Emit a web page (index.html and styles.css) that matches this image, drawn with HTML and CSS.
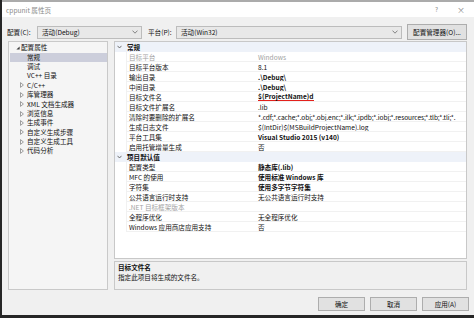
FILE: index.html
```html
<!DOCTYPE html>
<html lang="zh-CN">
<head>
<meta charset="utf-8">
<title>cppunit 属性页</title>
<link rel="stylesheet" href="styles.css">
</head>
<body>
<div class="frame">
  <div class="window">
    <div class="titlebar">
      <span class="title">cppunit 属性页</span>
      <span class="tb-btns"><span class="help">?</span><span class="close">×</span></span>
    </div>

    <div class="toolbar">
      <span class="lbl lbl-config">配置(C):</span>
      <div class="combo combo-config"><span>活动(Debug)</span><svg class="dd" width="6" height="4" viewBox="0 0 6 4"><path d="M0.5 0.6 L3 3.2 L5.5 0.6" fill="none" stroke="#6a6a6a" stroke-width="0.8"/></svg></div>
      <span class="lbl lbl-plat">平台(P):</span>
      <div class="combo combo-plat"><span>活动(Win32)</span><svg class="dd" width="6" height="4" viewBox="0 0 6 4"><path d="M0.5 0.6 L3 3.2 L5.5 0.6" fill="none" stroke="#6a6a6a" stroke-width="0.8"/></svg></div>
      <div class="btn btn-mgr">配置管理器(O)...</div>
    </div>

    <div class="main">
      <div class="tree">
        <div class="node root"><svg class="exp" width="4" height="4" viewBox="0 0 4 4"><path d="M3.6 0.4 V3.6 H0.4 Z" fill="#3c3c3c"/></svg><span>配置属性</span></div>
        <div class="node leaf selected">常规</div>
        <div class="node leaf">调试</div>
        <div class="node leaf">VC++ 目录</div>
        <div class="node branch"><svg class="col" width="4" height="6" viewBox="0 0 4 6"><path d="M0.5 0.6 L3.4 3 L0.5 5.4 Z" fill="none" stroke="#7a7a7a" stroke-width="0.7"/></svg><span>C/C++</span></div>
        <div class="node branch"><svg class="col" width="4" height="6" viewBox="0 0 4 6"><path d="M0.5 0.6 L3.4 3 L0.5 5.4 Z" fill="none" stroke="#7a7a7a" stroke-width="0.7"/></svg><span>库管理器</span></div>
        <div class="node branch"><svg class="col" width="4" height="6" viewBox="0 0 4 6"><path d="M0.5 0.6 L3.4 3 L0.5 5.4 Z" fill="none" stroke="#7a7a7a" stroke-width="0.7"/></svg><span>XML 文档生成器</span></div>
        <div class="node branch"><svg class="col" width="4" height="6" viewBox="0 0 4 6"><path d="M0.5 0.6 L3.4 3 L0.5 5.4 Z" fill="none" stroke="#7a7a7a" stroke-width="0.7"/></svg><span>浏览信息</span></div>
        <div class="node branch"><svg class="col" width="4" height="6" viewBox="0 0 4 6"><path d="M0.5 0.6 L3.4 3 L0.5 5.4 Z" fill="none" stroke="#7a7a7a" stroke-width="0.7"/></svg><span>生成事件</span></div>
        <div class="node branch"><svg class="col" width="4" height="6" viewBox="0 0 4 6"><path d="M0.5 0.6 L3.4 3 L0.5 5.4 Z" fill="none" stroke="#7a7a7a" stroke-width="0.7"/></svg><span>自定义生成步骤</span></div>
        <div class="node branch"><svg class="col" width="4" height="6" viewBox="0 0 4 6"><path d="M0.5 0.6 L3.4 3 L0.5 5.4 Z" fill="none" stroke="#7a7a7a" stroke-width="0.7"/></svg><span>自定义生成工具</span></div>
        <div class="node branch"><svg class="col" width="4" height="6" viewBox="0 0 4 6"><path d="M0.5 0.6 L3.4 3 L0.5 5.4 Z" fill="none" stroke="#7a7a7a" stroke-width="0.7"/></svg><span>代码分析</span></div>
      </div>

      <div class="right">
        <div class="grid">
          <div class="row head"><svg class="chev" width="5" height="4" viewBox="0 0 5 4"><path d="M0.5 0.8 L2.5 3 L4.5 0.8" fill="none" stroke="#505050" stroke-width="0.8"/></svg><span>常规</span></div>
          <div class="row"><span class="gut"></span><span class="name dim">目标平台</span><span class="val dim">Windows</span></div>
          <div class="row"><span class="gut"></span><span class="name">目标平台版本</span><span class="val">8.1</span></div>
          <div class="row"><span class="gut"></span><span class="name">输出目录</span><span class="val b">.\Debug\</span></div>
          <div class="row"><span class="gut"></span><span class="name">中间目录</span><span class="val b">.\Debug\</span></div>
          <div class="row"><span class="gut"></span><span class="name">目标文件名</span><span class="val b"><span class="mark">$(ProjectName)d</span></span></div>
          <div class="row"><span class="gut"></span><span class="name">目标文件扩展名</span><span class="val">.lib</span></div>
          <div class="row"><span class="gut"></span><span class="name">清除时要删除的扩展名</span><span class="val long">*.cdf;*.cache;*.obj;*.obj.enc;*.ilk;*.ipdb;*.iobj;*.resources;*.tlb;*.tli;*.</span></div>
          <div class="row"><span class="gut"></span><span class="name">生成日志文件</span><span class="val">$(IntDir)$(MSBuildProjectName).log</span></div>
          <div class="row"><span class="gut"></span><span class="name">平台工具集</span><span class="val b">Visual Studio 2015 (v140)</span></div>
          <div class="row"><span class="gut"></span><span class="name">启用托管增量生成</span><span class="val">否</span></div>
          <div class="row head"><svg class="chev" width="5" height="4" viewBox="0 0 5 4"><path d="M0.5 0.8 L2.5 3 L4.5 0.8" fill="none" stroke="#505050" stroke-width="0.8"/></svg><span>项目默认值</span></div>
          <div class="row"><span class="gut"></span><span class="name">配置类型</span><span class="val b">静态库(.lib)</span></div>
          <div class="row"><span class="gut"></span><span class="name">MFC 的使用</span><span class="val b">使用标准 Windows 库</span></div>
          <div class="row"><span class="gut"></span><span class="name">字符集</span><span class="val b">使用多字节字符集</span></div>
          <div class="row"><span class="gut"></span><span class="name">公共语言运行时支持</span><span class="val">无公共语言运行时支持</span></div>
          <div class="row"><span class="gut"></span><span class="name dim">.NET 目标框架版本</span><span class="val"></span></div>
          <div class="row"><span class="gut"></span><span class="name">全程序优化</span><span class="val">无全程序优化</span></div>
          <div class="row"><span class="gut"></span><span class="name">Windows 应用商店应用支持</span><span class="val">否</span></div>
        </div>
        <div class="desc">
          <div class="desc-title">目标文件名</div>
          <div class="desc-text">指定此项目将生成的文件名。</div>
        </div>
      </div>
    </div>

    <div class="actions">
      <div class="btn btn-act">确定</div>
      <div class="btn btn-act">取消</div>
      <div class="btn btn-act">应用(A)</div>
    </div>
  </div>
</div>
</body>
</html>
```

FILE: styles.css
```css
* { box-sizing: border-box; margin: 0; padding: 0; }

html, body { width: 474px; height: 318px; overflow: hidden; }

body {
  background: #262626;
  font-family: "Noto Sans CJK SC", "Noto Sans", sans-serif;
  font-size: 6.6px;
  color: #111111;
}

.frame {
  display: flex;
  height: 315px;
  padding-left: 2px;
}

.window {
  flex: 1;
  display: flex;
  flex-direction: column;
  background: #f0f0f0;
  border-top: 2px solid #ababab;
}

/* title bar */
.titlebar {
  height: 15px;
  background: #ffffff;
  display: flex;
  align-items: center;
  justify-content: space-between;
  padding: 0 9px 0 4px;
}
.title { color: #8a8a8a; }
.tb-btns { display: flex; align-items: center; gap: 19px; color: #8a8a8a; }
.help { font-size: 6.4px; }
.close { font-size: 8px; }

/* toolbar */
.toolbar {
  margin-top: 7px;
  height: 16px;
  padding-left: 5px;
  display: flex;
  align-items: center;
}
.lbl { white-space: nowrap; }
.lbl-config { width: 30px; }
.lbl-plat { width: 28px; margin-left: 6px; }
.combo {
  height: 13px;
  background: #e8e8e8;
  border: 1px solid #bcbcbc;
  display: flex;
  align-items: center;
  justify-content: space-between;
  padding: 0 3px 0 4px;
}
.combo-config { width: 105px; }
.combo-plat { width: 226px; }
.btn {
  background: #e1e1e1;
  border: 1px solid #adadad;
  display: flex;
  align-items: center;
  justify-content: center;
  white-space: nowrap;
}
.btn-mgr { width: 60px; height: 16px; margin-left: 5px; }

/* main */
.main {
  margin-top: 1px;
  height: 249px;
  padding-left: 6px;
  display: flex;
  gap: 6px;
}

.tree {
  width: 100px;
  background: #f5f5f5;
  border: 1px solid #c9c9c9;
  padding-top: 1.2px;
}
.node {
  height: 9.4px;
  line-height: 9.4px;
  display: flex;
  align-items: center;
  white-space: nowrap;
}
.root { padding-left: 7px; gap: 1px; }
.branch { padding-left: 11px; gap: 3px; }
.leaf { padding-left: 18px; }
.selected { background: #cccedb; margin-left: 1px; padding-left: 17px; }

.right {
  width: 353px;
  display: flex;
  flex-direction: column;
  gap: 2px;
}

.grid {
  flex: 1;
  background: #ffffff;
  border: 1px solid #c8c8c8;
  overflow: hidden;
}
.row {
  height: 10px;
  display: flex;
  align-items: stretch;
  white-space: nowrap;
}
.row.head {
  background: #eef2f9;
  align-items: center;
  padding-left: 2px;
  gap: 5px;
  font-weight: bold;
}
.gut { width: 11px; flex: none; }
.name {
  width: 129px;
  flex: none;
  padding-left: 2px;
  display: flex;
  align-items: center;
  border-bottom: 1px solid #f1f1f1;
  border-left: 1px solid #f1f1f1;
  overflow: hidden;
}
.val {
  flex: 1;
  min-width: 0;
  padding-left: 3px;
  display: flex;
  align-items: center;
  border-bottom: 1px solid #f1f1f1;
  overflow: hidden;
}
.val.long { letter-spacing: -0.1px; }
.dim { color: #a2a2a2; }
.b { font-weight: bold; }
.mark {
  display: inline-block;
  line-height: 7px;
  border-bottom: 2px solid #e3211c;
  margin-top: 1px;
}

.desc {
  height: 29px;
  background: #f0f0f0;
  border: 1px solid #c8c8c8;
  padding-left: 3px;
  line-height: 10px;
}
.desc-title { font-weight: bold; }

/* bottom buttons */
.actions {
  margin-top: 7px;
  height: 14px;
  display: flex;
  justify-content: flex-end;
  gap: 5px;
  padding-right: 5px;
}
.btn-act { width: 47px; height: 14px; }
```
